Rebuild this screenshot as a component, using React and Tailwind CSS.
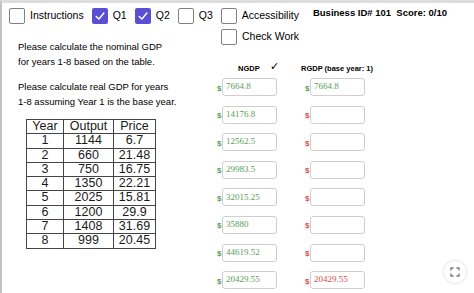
import React from 'react';

const sans = { fontFamily: '"Liberation Sans", Arial, sans-serif' };

function Box({ checked }) {
  if (checked) {
    return (
      <span className="flex h-4 w-4 shrink-0 items-center justify-center rounded-[2px] bg-[#5a4fd3]">
        <svg width="12" height="12" viewBox="0 0 12 12">
          <path d="M2.2 6.4 L4.9 9 L9.9 3" fill="none" stroke="white" strokeWidth="1.4" strokeLinecap="round" strokeLinejoin="round" />
        </svg>
      </span>
    );
  }
  return <span className="h-4 w-4 shrink-0 rounded-[2px] border-[1.5px] border-[#808080] bg-white" />;
}

function Check({ label, checked }) {
  return (
    <div className="flex h-4 items-center">
      <Box checked={checked} />
      <span className="ml-[5px] text-[10.5px] text-black">{label}</span>
    </div>
  );
}

const rows = [
  ['1', '1144', '6.7'],
  ['2', '660', '21.48'],
  ['3', '750', '16.75'],
  ['4', '1350', '22.21'],
  ['5', '2025', '15.81'],
  ['6', '1200', '29.9'],
  ['7', '1408', '31.69'],
  ['8', '999', '20.45'],
];

const answers = [
  ['7664.8', '7664.8'],
  ['14176.8', ''],
  ['12562.5', ''],
  ['29983.5', ''],
  ['32015.25', ''],
  ['35880', ''],
  ['44619.52', ''],
  ['20429.55', '20429.55'],
];

function Field({ value, good }) {
  const color = good ? 'text-[#5b9d5b]' : 'text-[#dd4a4f]';
  return (
    <div className="flex items-center">
      <span className={`w-[5px] text-[8px] font-bold leading-none mt-[3px] ${color}`}>$</span>
      <div
        className={`flex h-[18px] w-[55px] items-center rounded-[3px] border border-[#cfcfcf] bg-white pl-[3px] text-[9px] ${color}`}
        style={{ fontFamily: '"Liberation Serif", "Times New Roman", serif' }}
      >
        {value}
      </div>
    </div>
  );
}

export default function App() {
  return (
    <div
      className="relative h-[293px] w-[474px] overflow-hidden border-l-2 border-t-[3px] border-l-[#c2c2c2] border-t-[#dedede] bg-white pt-[5px]"
      style={sans}
    >
      {/* top bar */}
      <div className="flex items-start pl-[7px]">
        <div className="flex gap-[8px]">
          <Check label="Instructions" />
          <Check label="Q1" checked />
          <Check label="Q2" checked />
          <Check label="Q3" />
          <Check label="Accessibility" />
        </div>
        <div className="ml-[14px] mt-[-2px] whitespace-pre text-[9.5px] font-bold text-black">
          Business ID# 101  Score: 0/10
        </div>
      </div>

      <div className="mt-[5px] flex">
        {/* left */}
        <div className="w-[215px] shrink-0">
          <div className="ml-[16px] mt-[11px] text-[9.5px] leading-[14.5px] text-black">
            <p>Please calculate the nominal GDP<br />for years 1-8 based on the table.</p>
            <p className="mt-[11px]">Please calculate real GDP for years<br />1-8 assuming Year 1 is the base year.</p>
          </div>
          <table className="ml-[24px] mt-[10px] border-collapse text-center text-[12.5px] leading-[13.3px] text-[#1a1a1a]">
            <thead>
              <tr>
                <th className="w-[37px] border border-[#444] font-normal">Year</th>
                <th className="w-[50px] border border-[#444] font-normal">Output</th>
                <th className="w-[42px] border border-[#444] font-normal">Price</th>
              </tr>
            </thead>
            <tbody>
              {rows.map((r) => (
                <tr key={r[0]}>
                  {r.map((c, i) => (
                    <td key={i} className="border border-[#444]">{c}</td>
                  ))}
                </tr>
              ))}
            </tbody>
          </table>
        </div>

        {/* right */}
        <div className="flex flex-col">
          <div className="ml-[4px]">
            <Check label="Check Work" />
          </div>
          <div className="mt-[19px] flex h-[10px] items-center text-[7.5px] font-bold text-black">
            <div className="flex w-[84px] items-center">
              <span className="ml-[21px]">NGDP</span>
              <span className="ml-[10px] mt-[-6px] text-[11px] font-normal">✓</span>
            </div>
            <span>RGDP (base year: 1)</span>
          </div>
          <div className="mt-[4px] flex flex-col gap-[9.6px]">
            {answers.map((a, i) => (
              <div key={i} className="flex">
                <div className="w-[88px]">
                  <Field value={a[0]} good />
                </div>
                <Field value={a[1]} good={i === 0} />
              </div>
            ))}
          </div>
        </div>
      </div>

      <button className="absolute bottom-[10px] right-[8px] flex h-[22px] w-[22px] items-center justify-center rounded-full bg-white shadow-[0_0_3px_rgba(0,0,0,0.2)]">
        <svg width="10" height="10" viewBox="0 0 10 10" fill="none" stroke="#777" strokeWidth="1.3">
          <path d="M1 3.5V1h2.5M6.5 1H9v2.5M9 6.5V9H6.5M3.5 9H1V6.5" />
        </svg>
      </button>
    </div>
  );
}
